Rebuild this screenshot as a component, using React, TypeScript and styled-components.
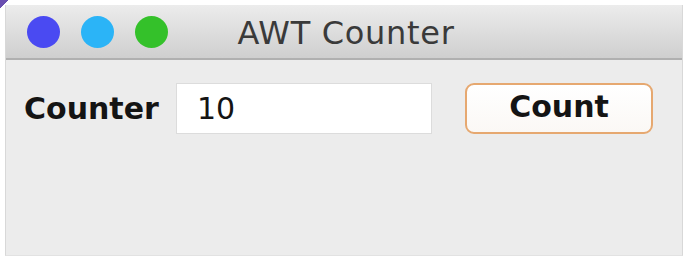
import styled, { createGlobalStyle } from "styled-components";

const GlobalStyle = createGlobalStyle`
  html, body {
    margin: 0;
    padding: 0;
    background: #ffffff;
  }
  body {
    font-family: "DejaVu Sans", "Noto Sans", sans-serif;
  }
`;

const lights = ["#4a4af2", "#2bb4f7", "#34c12a"];

const App = () => {
  return (
    <>
      <GlobalStyle />
      <Page>
        <Corner />
        <Window>
          <TitleBar>
            <Lights>
              {lights.map((c) => (
                <Light key={c} color={c} />
              ))}
            </Lights>
            <Title>AWT Counter</Title>
          </TitleBar>
          <Content>
            <Row>
              <Label>Counter</Label>
              <Field>10</Field>
              <CountButton>Count</CountButton>
            </Row>
          </Content>
        </Window>
      </Page>
    </>
  );
};

export default App;

const Page = styled.div`
  position: relative;
  width: 688px;
  height: 260px;
  padding: 5px 0 0 5px;
  box-sizing: border-box;
`;

const Corner = styled.div`
  position: absolute;
  left: 0;
  top: 0;
  width: 12px;
  height: 12px;
  background: linear-gradient(135deg, #6a4fb0 0%, #6a4fb0 35%, transparent 36%);
`;

const Window = styled.div`
  width: 678px;
  height: 251px;
  display: flex;
  flex-direction: column;
  background: #ececec;
  border-left: 1px solid #d8d8d8;
  border-right: 1px solid #d8d8d8;
  border-bottom: 1px solid #e2e2e2;
  box-sizing: border-box;
`;

const TitleBar = styled.div`
  position: relative;
  height: 55px;
  flex-shrink: 0;
  display: flex;
  align-items: center;
  justify-content: center;
  background: linear-gradient(#ececec, #cfcfcf);
  border-bottom: 2px solid #b0b0b0;
  box-sizing: border-box;
`;

const Lights = styled.div`
  position: absolute;
  left: 21px;
  top: 11px;
  display: flex;
  gap: 21px;
`;

const Light = styled.span<{ color: string }>`
  width: 33px;
  height: 32px;
  border-radius: 50%;
  background: ${(p) => p.color};
`;

const Title = styled.div`
  font-size: 32px;
  color: #3a3a3a;
  letter-spacing: 0.7px;
  margin-left: 4px;
  margin-top: 2px;
`;

const Content = styled.div`
  flex: 1;
  padding: 23px 0 0 18px;
`;

const Row = styled.div`
  display: flex;
  align-items: center;
`;

const Label = styled.div`
  width: 152px;
  font-size: 30px;
  font-weight: bold;
  color: #141414;
`;

const Field = styled.div`
  width: 256px;
  height: 51px;
  box-sizing: border-box;
  background: #ffffff;
  border: 1px solid #dcdcdc;
  padding-left: 20px;
  display: flex;
  align-items: center;
  font-size: 30px;
  color: #141414;
`;

const CountButton = styled.button`
  margin-left: 33px;
  width: 188px;
  height: 51px;
  box-sizing: border-box;
  border: 2px solid #e6a870;
  border-radius: 9px;
  background: linear-gradient(#ffffff, #fbf8f5);
  font-family: "DejaVu Sans", "Noto Sans", sans-serif;
  font-size: 30px;
  font-weight: bold;
  color: #141414;
  padding: 0 0 4px 0;
`;
